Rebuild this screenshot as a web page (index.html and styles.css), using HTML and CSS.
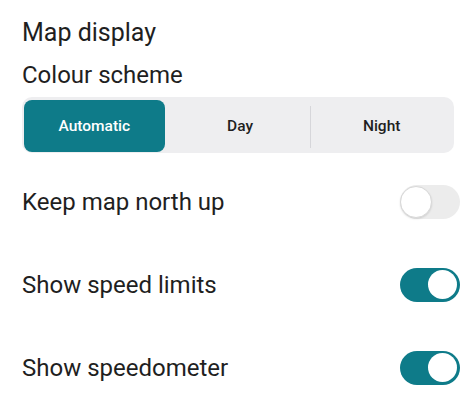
FILE: index.html
```html
<!DOCTYPE html>
<html>
<head>
<meta charset="utf-8">
<link rel="stylesheet" href="styles.css">
</head>
<body>
<div class="page">
  <h1 class="title">Map display</h1>
  <h2 class="subtitle">Colour scheme</h2>
  <div class="segmented">
    <div class="seg active">Automatic</div>
    <div class="seg">Day</div>
    <div class="sep"></div>
    <div class="seg">Night</div>
  </div>
  <div class="rows">
    <div class="row">
      <span class="label">Keep map north up</span>
      <span class="toggle off"><span class="thumb"></span></span>
    </div>
    <div class="row">
      <span class="label">Show speed limits</span>
      <span class="toggle on"><span class="thumb"></span></span>
    </div>
    <div class="row">
      <span class="label">Show speedometer</span>
      <span class="toggle on"><span class="thumb"></span></span>
    </div>
  </div>
</div>
</body>
</html>
```
FILE: styles.css
```css
html, body {
  margin: 0;
  padding: 0;
  background: #ffffff;
}
body {
  font-family: Roboto, "Liberation Sans", sans-serif;
  color: #1f1f1f;
  width: 474px;
  height: 411px;
  overflow: hidden;
}
.page {
  padding: 17px 15px 0 22px;
}
.title {
  margin: 0;
  font-size: 25px;
  font-weight: 400;
  line-height: 32px;
}
.subtitle {
  margin: 10px 0 0 0;
  font-size: 24px;
  font-weight: 400;
  line-height: 32px;
}
.segmented {
  margin-top: 6px;
  width: 432px;
  height: 56px;
  box-sizing: border-box;
  background: #eeeef0;
  border-radius: 10px;
  display: flex;
  align-items: stretch;
  padding: 3px 2px 1px 2px;
}
.seg {
  flex: 1;
  display: flex;
  align-items: center;
  justify-content: center;
  font-size: 15.5px;
  font-weight: 500;
  color: #1f1f1f;
}
.seg.active {
  background: #0e7b89;
  color: #ffffff;
  border-radius: 8px;
  margin-right: 5px;
}
.sep {
  width: 1px;
  background: #d6d6da;
  margin: 6px 0 4px 0;
}
.rows {
  margin-top: 7px;
}
.row {
  height: 83px;
  display: flex;
  align-items: center;
  justify-content: space-between;
}
.label {
  font-size: 24px;
  line-height: 30px;
}
.toggle {
  width: 60px;
  height: 34px;
  border-radius: 17px;
  box-sizing: border-box;
  display: flex;
  align-items: center;
  margin-right: -1px;
}
.toggle.off {
  background: #ececec;
  justify-content: flex-start;
}
.toggle.on {
  background: #0e7b89;
  justify-content: flex-end;
  padding-right: 3px;
}
.thumb {
  width: 32px;
  height: 32px;
  border-radius: 50%;
  background: #ffffff;
  box-sizing: border-box;
}
.toggle.off .thumb {
  border: 1px solid #d8d8d8;
  box-shadow: 0 1px 2px rgba(0,0,0,0.12);
}
.toggle.on .thumb {
  width: 29px;
  height: 29px;
}
```
